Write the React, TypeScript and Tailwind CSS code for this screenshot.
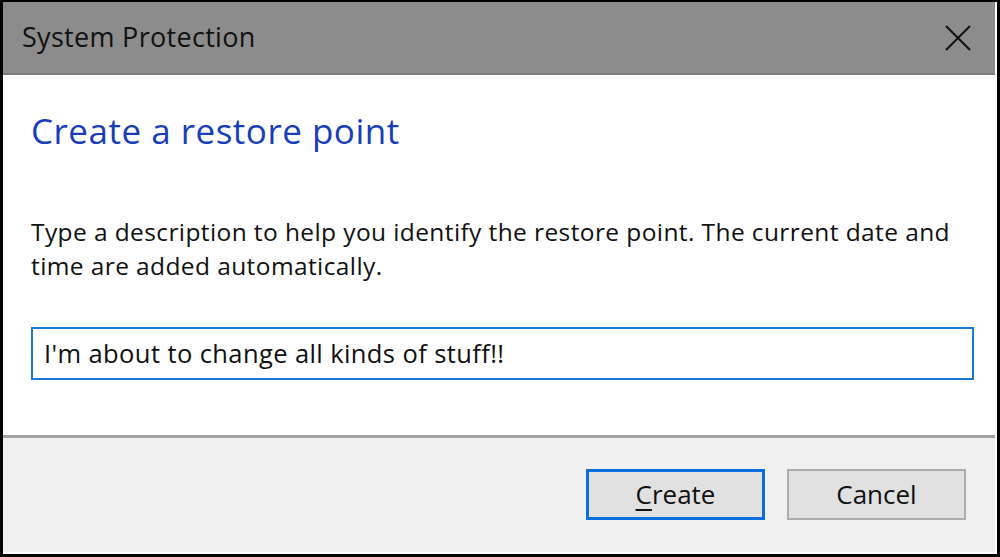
import React from 'react';

const font = { fontFamily: '"Open Sans", "Noto Sans", sans-serif' };

const CloseIcon = () => (
  <svg width="26" height="26" viewBox="0 0 26 26" fill="none" stroke="#111" strokeWidth="2">
    <path d="M1 1 L25 25 M25 1 L1 25" />
  </svg>
);

const App = () => {
  return (
    <div className="w-[1000px] h-[557px] bg-black pt-[2px] pl-[3px] pr-[3px] pb-[3px]" style={font}>
      <div className="flex flex-col h-full bg-white border-r-2 border-b-2 border-white">
        {/* title bar */}
        <div className="flex items-center justify-between h-[73px] bg-[#8c8c8c] border-b-2 border-[#7c7c7c] pl-[19px] pr-[24px]">
          <span className="text-[27px] text-[#111] tracking-[0.3px]">System Protection</span>
          <CloseIcon />
        </div>

        {/* body */}
        <div className="flex flex-col flex-1 bg-white px-[28px] pt-[30px]">
          <h1 className="text-[35px] text-[#1a3db8] leading-[52px] tracking-[0.5px]">Create a restore point</h1>
          <p className="mt-[58px] text-[24.5px] leading-[34px] text-[#111] tracking-[0.4px]">
            Type a description to help you identify the restore point. The current date and time are added automatically.
          </p>
          <div className="mt-[44px] h-[53px] border-2 border-[#1a78d6] flex items-center px-[11px] w-[943px]">
            <span className="text-[25.5px] text-[#111] tracking-[0.4px]">I'm about to change all kinds of stuff!!</span>
          </div>
        </div>

        {/* footer */}
        <div className="h-[117px] bg-[#f0f0f0] border-t-[3px] border-[#a3a3a3] flex items-start justify-end gap-[22px] pt-[31px] pr-[29px]">
          <button className="w-[179px] h-[51px] bg-[#e1e1e1] border-[3px] border-[#0a6fdc] text-[26px] text-[#111] flex items-center justify-center">
            <span><span className="underline underline-offset-[5px]">C</span>reate</span>
          </button>
          <button className="w-[179px] h-[51px] bg-[#e1e1e1] border-2 border-[#adadad] text-[26px] text-[#111] flex items-center justify-center">
            Cancel
          </button>
        </div>
      </div>
    </div>
  );
};

export default App;
